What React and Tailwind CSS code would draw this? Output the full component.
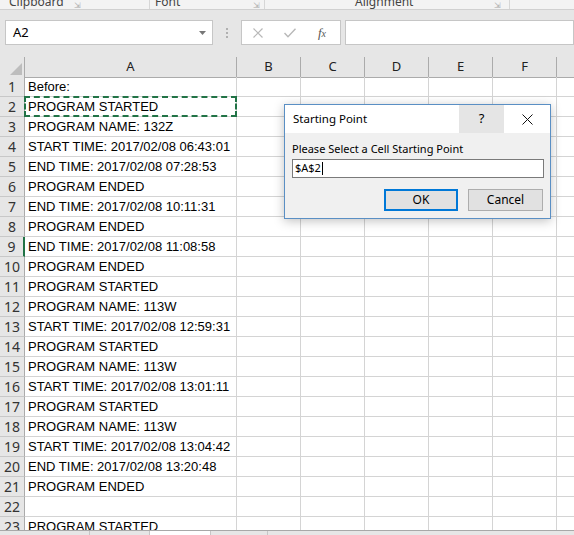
import React from 'react';

const rows = [
  'Before:',
  'PROGRAM STARTED',
  'PROGRAM NAME: 132Z',
  'START TIME: 2017/02/08 06:43:01',
  'END TIME: 2017/02/08 07:28:53',
  'PROGRAM ENDED',
  'END TIME: 2017/02/08 10:11:31',
  'PROGRAM ENDED',
  'END TIME: 2017/02/08 11:08:58',
  'PROGRAM ENDED',
  'PROGRAM STARTED',
  'PROGRAM NAME: 113W',
  'START TIME: 2017/02/08 12:59:31',
  'PROGRAM STARTED',
  'PROGRAM NAME: 113W',
  'START TIME: 2017/02/08 13:01:11',
  'PROGRAM STARTED',
  'PROGRAM NAME: 113W',
  'START TIME: 2017/02/08 13:04:42',
  'END TIME: 2017/02/08 13:20:48',
  'PROGRAM ENDED',
  '',
  'PROGRAM STARTED',
];

const cols = ['B', 'C', 'D', 'E', 'F', ''];

const uiFont = { fontFamily: '"Noto Sans", "Open Sans", sans-serif' };
const cellFont = { fontFamily: '"Liberation Sans", Arial, sans-serif' };

const Dialog = () => (
  <div className="absolute left-[284px] top-[104px] w-[267px] h-[115px] border border-[#5a8fc4] bg-[#f0f0f0] shadow-[0_2px_10px_rgba(0,0,0,0.25)] flex flex-col" style={uiFont}>
    <div className="h-[28px] bg-white flex items-center">
      <span className="pl-[8px] text-[11.5px] text-black flex-1">Starting Point</span>
      <div className="w-[45px] h-full bg-[#e5e5e5] flex items-center justify-center text-[13px] text-black">?</div>
      <div className="w-[46px] h-full flex items-center justify-center">
        <svg width="11" height="11" viewBox="0 0 11 11">
          <path d="M0.5 0.5 L10.5 10.5 M10.5 0.5 L0.5 10.5" stroke="#111" strokeWidth="1" />
        </svg>
      </div>
    </div>
    <div className="px-[7px] pt-[9px]">
      <div className="text-[11px] leading-[14px] text-black">Please Select a Cell Starting Point</div>
      <div className="mt-[3px] h-[19px] w-[252px] border border-[#7a7a7a] bg-white flex items-center pl-[2px] text-[11px] text-black">
        $A$2<span className="ml-[1px] w-px h-[13px] bg-black" />
      </div>
      <div className="mt-[11px] flex justify-end gap-[10px]">
        <button className="w-[74px] h-[22px] border-2 border-[#0078d7] bg-[#e1e1e1] text-[12px] text-black">OK</button>
        <button className="w-[75px] h-[22px] border border-[#adadad] bg-[#e1e1e1] text-[12px] text-black">Cancel</button>
      </div>
    </div>
  </div>
);

export default function App() {
  return (
    <div className="relative w-[574px] h-[535px] overflow-hidden bg-[#e6e6e6] flex flex-col">
      {/* ribbon group labels */}
      <div className="h-[10px] overflow-hidden border-b border-[#d0d0d0] bg-[#f3f3f3] flex text-[12px] leading-[16px] text-[#444]" style={uiFont}>
        <div className="w-[150px] -mt-[6px] pl-[9px] flex gap-[10px] border-r border-[#d6d6d6]">Clipboard <span className="text-[8px] text-[#aaa] mt-[3px]">⇲</span></div>
        <div className="w-[115px] -mt-[6px] pl-[5px] flex justify-between pr-[4px] border-r border-[#d6d6d6]"><span>Font</span><span className="text-[8px] text-[#aaa] mt-[3px]">⇲</span></div>
        <div className="w-[245px] -mt-[6px] flex justify-between pr-[8px] pl-[90px] border-r border-[#d6d6d6]"><span>Alignment</span><span className="text-[8px] text-[#aaa] mt-[3px]">⇲</span></div>
      </div>

      {/* formula bar */}
      <div className="h-[47px] flex items-start pt-[10px]" style={uiFont}>
        <div className="ml-[5px] w-[208px] h-[25px] bg-white border border-[#c6c6c6] flex items-center justify-between pl-[7px] pr-[6px]">
          <span className="text-[13px] text-black">A2</span>
          <svg width="7" height="4" viewBox="0 0 7 4"><path d="M0 0 L7 0 L3.5 4 Z" fill="#777" /></svg>
        </div>
        <div className="w-[28px] h-[25px] flex flex-col items-center justify-center gap-[2px]">
          <span className="w-[2px] h-[2px] bg-[#b0b0b0]" />
          <span className="w-[2px] h-[2px] bg-[#b0b0b0]" />
          <span className="w-[2px] h-[2px] bg-[#b0b0b0]" />
        </div>
        <div className="w-[100px] h-[25px] bg-white border border-[#c6c6c6] flex items-center">
          <div className="w-[32px] flex justify-center">
            <svg width="10" height="10" viewBox="0 0 10 10"><path d="M0.5 0.5 L9.5 9.5 M9.5 0.5 L0.5 9.5" stroke="#b8b8b8" strokeWidth="1.2" /></svg>
          </div>
          <div className="w-[32px] flex justify-center">
            <svg width="12" height="10" viewBox="0 0 12 10"><path d="M0.5 5 L4 8.8 L11.5 0.8" stroke="#b8b8b8" strokeWidth="1.4" fill="none" /></svg>
          </div>
          <div className="w-[32px] flex justify-center text-[13px] italic text-[#555]" style={{ fontFamily: '"Liberation Serif", serif' }}>
            f<span className="text-[10px] mt-[3px]">x</span>
          </div>
        </div>
        <div className="ml-[4px] flex-1 h-[25px] bg-white border border-[#c6c6c6]" />
      </div>

      {/* sheet grid */}
      <div className="flex-1 overflow-hidden bg-white">
        <div className="grid grid-cols-[25px_212px_64px_64px_64px_64px_64px_64px] auto-rows-[20px]" style={cellFont}>
          {/* header row */}
          <div className="h-[21px] bg-[#e6e6e6] border-r border-b border-[#ababab] flex items-end justify-end p-[2px]">
            <svg width="12" height="12" viewBox="0 0 12 12"><path d="M12 0 L12 12 L0 12 Z" fill="#bdbdbd" /></svg>
          </div>
          <div className="h-[21px] bg-[#e6e6e6] border-r border-b border-[#ababab] flex items-center justify-center text-[13px] text-[#222]" style={uiFont}>A</div>
          {cols.map((c, i) => (
            <div key={i} className="h-[21px] bg-[#e6e6e6] border-r border-b border-[#ababab] flex items-center justify-center text-[13px] text-[#222]" style={uiFont}>{c}</div>
          ))}

          {rows.map((text, r) => (
            <React.Fragment key={r}>
              <div className={`bg-[#e6e6e6] border-b border-[#c8c8c8] flex items-center justify-center text-[14px] text-[#333] ${r === 8 ? 'border-r-2 border-r-[#217346]' : 'border-r border-r-[#ababab]'}`} style={uiFont}>
                {r + 1}
              </div>
              <div className="relative border-r border-b border-[#d4d4d4] flex items-center pl-[3px] text-[13px] text-black whitespace-nowrap overflow-visible">
                {text}
                {r === 1 && (
                  <div className="absolute -left-[1px] -top-[1px] w-[213px] h-[21px] border-2 border-dashed border-[#217346]" />
                )}
              </div>
              {cols.map((c, i) => (
                <div key={i} className="border-r border-b border-[#d4d4d4]" />
              ))}
            </React.Fragment>
          ))}
        </div>
      </div>

      {/* sheet tab strip */}
      <div className="h-[5px] bg-[#e6e6e6] border-t border-[#a8a8a8] flex">
        <div className="w-[90px] border-r border-[#c6c6c6]" />
        <div className="w-[60px] border-r border-[#c6c6c6]" />
        <div className="w-[60px] bg-white" />
        <div className="w-[58px] border-x border-[#c6c6c6]" />
      </div>

      <Dialog />
    </div>
  );
}
